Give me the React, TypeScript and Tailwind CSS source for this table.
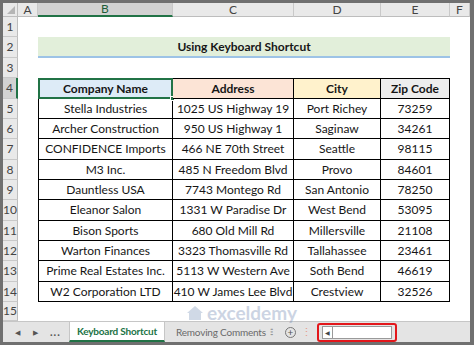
import React from "react";

const rows = [
  ["Stella Industries", "1025 US Highway 19", "Port Richey", "73259"],
  ["Archer Construction", "950 US Highway 1", "Saginaw", "34261"],
  ["CONFIDENCE Imports", "466 NE 70th Street", "Seattle", "98115"],
  ["M3 Inc.", "485 N Freedom Blvd", "Provo", "84601"],
  ["Dauntless USA", "7743 Montego Rd", "San Antonio", "78250"],
  ["Eleanor Salon", "1331 W Paradise Dr", "West Bend", "53095"],
  ["Bison Sports", "680 Old Mill Rd", "Millersville", "21108"],
  ["Warton Finances", "3323 Thomasville Rd", "Tallahassee", "23461"],
  ["Prime Real Estates Inc.", "5113 W Western Ave", "Soth Bend", "46619"],
  ["W2 Corporation LTD", "410 W James Lee Blvd", "Crestview", "32526"],
];

const headers = [
  { label: "Company Name", bg: "bg-[#ddebf7]" },
  { label: "Address", bg: "bg-[#fce4d6]" },
  { label: "City", bg: "bg-[#fff2cc]" },
  { label: "Zip Code", bg: "bg-[#ededed]" },
];

const RowHead = ({ n, active }: { n: number; active?: boolean }) => (
  <div
    className={`flex items-center justify-center border-b border-[#c9c9c9] text-[12px] text-[#444] ${
      active ? "bg-[#d2d2d2] border-r-2 border-r-[#217346]" : "bg-[#e9e9e9] border-r border-r-[#bdbdbd]"
    }`}
  >
    {n}
  </div>
);

export default function App() {
  return (
    <div
      className="relative flex h-[345px] w-[474px] flex-col overflow-hidden bg-[#707070] pt-[3px] pb-[3px] pl-[3px] pr-[4px]"
      style={{ fontFamily: "Lato, 'Open Sans', sans-serif" }}
    >
      <div className="grid grid-cols-[15px_20px_135px_121px_87px_69px_20px] grid-rows-[14px_20px_21px_20px_21px_20px_20px_21px_20px_20px_21px_20px_20px_21px_20px_19px] bg-white text-[12px] text-[#161616]">
        {/* column header row */}
        <div className="relative border-r border-b border-[#bdbdbd] bg-[#e9e9e9]">
          <svg className="absolute right-[2px] bottom-[2px]" width="8" height="8" viewBox="0 0 8 8">
            <path d="M8 0 L8 8 L0 8 Z" fill="#b5b5b5" />
          </svg>
        </div>
        {["A", "B", "C", "D", "E", "F"].map((c) => (
          <div
            key={c}
            className={`flex items-center justify-center border-r border-[#c9c9c9] text-[12px] ${
              c === "B"
                ? "border-b-2 border-b-[#217346] bg-[#d2d2d2] text-[#1e5e3a]"
                : "border-b border-b-[#bdbdbd] bg-[#e9e9e9] text-[#444]"
            }`}
          >
            {c}
          </div>
        ))}

        {/* row 1 */}
        <RowHead n={1} />
        <div className="col-span-6" />

        {/* row 2 title */}
        <RowHead n={2} />
        <div />
        <div className="col-span-4 flex items-center justify-center border-b-2 border-[#9dc3e6] bg-[#e2efda] text-[12px] font-bold">
          Using Keyboard Shortcut
        </div>
        <div />

        {/* row 3 */}
        <RowHead n={3} />
        <div className="col-span-6" />

        {/* row 4 headers */}
        <RowHead n={4} active />
        <div />
        {headers.map((h, i) => (
          <div
            key={h.label}
            className={`relative flex items-center justify-center border-t border-r border-b border-black font-bold ${h.bg} ${
              i === 0 ? "border-l" : ""
            }`}
          >
            {h.label}
            {i === 0 && (
              <div className="pointer-events-none absolute -inset-[1px] border-2 border-[#217346]">
                <div className="absolute -right-[4px] -bottom-[4px] h-[5px] w-[5px] border border-white bg-[#217346]" />
              </div>
            )}
          </div>
        ))}
        <div />

        {/* data rows */}
        {rows.map((r, idx) => (
          <React.Fragment key={idx}>
            <RowHead n={idx + 5} />
            <div />
            {r.map((v, i) => (
              <div
                key={i}
                className={`flex items-center justify-center whitespace-nowrap border-r border-b border-black ${
                  i === 0 ? "border-l" : ""
                }`}
              >
                {v}
              </div>
            ))}
            <div />
          </React.Fragment>
        ))}

        {/* row 15 */}
        <RowHead n={15} />
        <div className="col-span-6" />
      </div>

      {/* sheet tabs bar */}
      <div className="flex h-[21px] items-stretch whitespace-nowrap border-t border-[#c6c6c6] bg-[#e4e4e4] text-[10px]">
        <div className="flex w-[66px] items-center text-[#555]">
          <span className="ml-[12px] text-[7px]">◀</span>
          <span className="ml-[13px] text-[7px]">▶</span>
          <span className="ml-[12px] text-[11px] font-bold tracking-[1px]">...</span>
        </div>
        <div className="flex w-[96px] items-center justify-center border-b-2 border-x border-[#c6c6c6] border-b-[#217346] bg-white font-bold tracking-[-0.2px] text-[#217346]">
          Keyboard Shortcut
        </div>
        <div className="flex w-[110px] items-center pl-[11px] tracking-[-0.2px] text-[#6a6a6a]">
          Removing Comments
          <span className="ml-[4px] text-[9px] tracking-[-1px] text-[#888]">⁝⁝</span>
        </div>
        <div className="ml-[10px] flex items-center">
          <div className="flex h-[11px] w-[11px] items-center justify-center rounded-full border border-[#777] text-[10px] leading-none text-[#555]">
            +
          </div>
        </div>
        <div className="ml-[6px] flex w-[8px] items-center justify-center text-[11px] text-[#e59a8a]">⋮</div>
        <div className="ml-[7px] mt-[1px] flex h-[19px] w-[80px] items-center rounded-[3px] border-2 border-[#e3171b] px-[3px]">
          <div className="flex h-[13px] w-full items-center border border-[#9a9a9a] bg-white">
            <div className="flex h-full w-[10px] items-center justify-center border-r border-[#9a9a9a] text-[6px] text-[#444]">
              ◀
            </div>
          </div>
        </div>
      </div>

      {/* watermark */}
      <div className="pointer-events-none absolute left-[186px] top-[303px] flex items-center gap-[3px] opacity-35">
        <svg width="18" height="16" viewBox="0 0 18 16">
          <path d="M9 1 L17 8 L15 8 L15 15 L3 15 L3 8 L1 8 Z" fill="#7c93b8" />
        </svg>
        <span className="text-[19px] font-bold leading-none text-[#6f87b0]">exceldemy</span>
      </div>
    </div>
  );
}
